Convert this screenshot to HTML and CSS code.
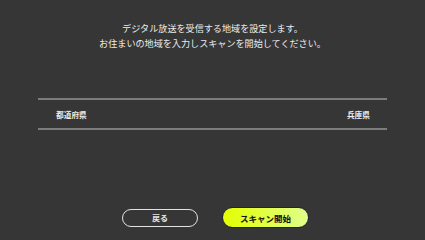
FILE: index.html
```html
<!DOCTYPE html>
<html lang="ja">
<head>
<meta charset="utf-8">
<link rel="stylesheet" href="styles.css">
</head>
<body>
<main class="screen">
  <p class="intro">デジタル放送を受信する地域を設定します。<br>お住まいの地域を入力しスキャンを開始してください。</p>
  <div class="setting">
    <span class="label">都道府県</span>
    <span class="value">兵庫県</span>
  </div>
  <div class="actions">
    <button class="btn btn-back">戻る</button>
    <button class="btn btn-start">スキャン開始</button>
  </div>
</main>
</body>
</html>
```
FILE: styles.css
```css
html, body {
  margin: 0;
  padding: 0;
  background: #363636;
}
.screen {
  width: 425px;
  height: 239px;
  display: flex;
  flex-direction: column;
  font-family: "Noto Sans CJK JP", "Noto Sans", sans-serif;
  color: #ececec;
  box-sizing: border-box;
}
.intro {
  margin: 0;
  padding-top: 21px;
  font-size: 9.1px;
  line-height: 15px;
  text-align: center;
}
.setting {
  margin: 47px 38px 0 38px;
  height: 28px;
  border-top: 2px solid #7c7c7c;
  border-bottom: 2px solid #7c7c7c;
  display: flex;
  align-items: center;
  justify-content: space-between;
  padding: 0 17px 0 18px;
  font-size: 7.7px;
  font-weight: 700;
}
.actions {
  margin-top: 77px;
  display: flex;
  align-items: center;
  justify-content: center;
  gap: 24px;
  padding-left: 6px;
}
.btn {
  font-family: "Noto Sans CJK JP", "Noto Sans", sans-serif;
  font-weight: 700;
  font-size: 8px;
  border-radius: 999px;
  padding: 0;
  box-sizing: border-box;
}
.btn-back {
  width: 76px;
  height: 18px;
  background: transparent;
  color: #e6e6e6;
  border: 1.5px solid #e2e2e2;
}
.btn-start {
  width: 87px;
  height: 21px;
  color: #111;
  border: 1px solid #22223a;
  background: linear-gradient(90deg, #e4ff00 0%, #e2ff40 45%, #e0ff8a 100%);
  font-size: 8.5px;
}
```
